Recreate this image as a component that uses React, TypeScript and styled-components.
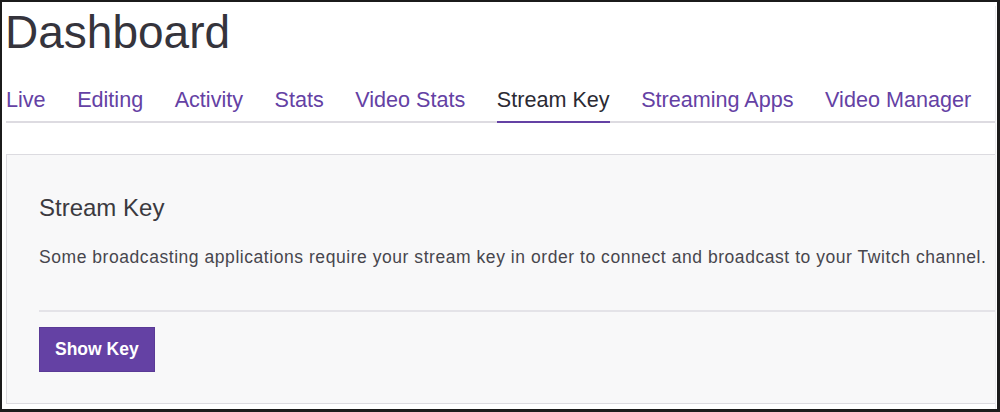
import React from "react";
import styled, { createGlobalStyle } from "styled-components";

const Global = createGlobalStyle`
  html, body { margin: 0; padding: 0; background: #ffffff; }
  * { box-sizing: border-box; }
  body { font-family: "Liberation Sans", Arial, sans-serif; }
`;

const Frame = styled.div`
  width: 1000px;
  height: 412px;
  border-style: solid;
  border-color: #1b1b1b;
  border-width: 2px 3px 3px 2px;
  padding: 4px 0 0 3px;
  overflow: hidden;
  background: #ffffff;
  display: flex;
  flex-direction: column;
`;

const Page = styled.div`
  flex: 1;
  display: flex;
  flex-direction: column;
  border-right: 1px solid #ececef;
  margin-right: 1px;
`;

const Title = styled.h1`
  margin: 0;
  font-size: 46px;
  line-height: 52px;
  font-weight: 400;
  color: #35343c;
`;

const Tabs = styled.nav`
  margin: 30px 0 0 1px;
  display: flex;
  gap: 31.5px;
  border-bottom: 2px solid #dddbe1;
`;

const Tab = styled.a<{ $active?: boolean }>`
  display: block;
  font-size: 21.6px;
  line-height: 24px;
  padding-bottom: 9px;
  margin-bottom: -2px;
  white-space: nowrap;
  color: ${(p) => (p.$active ? "#2b2a33" : "#6441a4")};
  border-bottom: 2px solid ${(p) => (p.$active ? "#6441a4" : "transparent")};
  cursor: pointer;
`;

const Card = styled.section`
  margin: 31px 0 0 1px;
  background: #f8f8f9;
  border: 1px solid #dcdbe0;
  border-right: 0;
  padding: 38px 0 31px 32px;
  display: flex;
  flex-direction: column;
  align-items: flex-start;
`;

const CardTitle = styled.h2`
  margin: 0;
  font-size: 24px;
  line-height: 30px;
  font-weight: 400;
  color: #3b3a40;
`;

const CardText = styled.p`
  margin: 24px 0 0;
  font-size: 17.5px;
  line-height: 20px;
  letter-spacing: 0.55px;
  color: #47464d;
  white-space: nowrap;
`;

const Divider = styled.hr`
  align-self: stretch;
  margin: 43px 0 0;
  border: 0;
  border-top: 2px solid #e4e3e8;
`;

const Button = styled.button`
  margin-top: 15px;
  height: 45px;
  padding: 0 15px;
  background: #6441a4;
  border: 1px solid #5a3a96;
  color: #ffffff;
  font-family: "Liberation Sans", Arial, sans-serif;
  font-size: 17.5px;
  font-weight: 700;
  cursor: pointer;
`;

const tabs = [
  "Live",
  "Editing",
  "Activity",
  "Stats",
  "Video Stats",
  "Stream Key",
  "Streaming Apps",
  "Video Manager",
];

export default function App() {
  return (
    <>
      <Global />
      <Frame>
        <Page>
          <Title>Dashboard</Title>
          <Tabs>
            {tabs.map((t) => (
              <Tab key={t} $active={t === "Stream Key"}>
                {t}
              </Tab>
            ))}
          </Tabs>
          <Card>
            <CardTitle>Stream Key</CardTitle>
            <CardText>
              Some broadcasting applications require your stream key in order to connect and broadcast to your Twitch channel.
            </CardText>
            <Divider />
            <Button>Show Key</Button>
          </Card>
        </Page>
      </Frame>
    </>
  );
}
